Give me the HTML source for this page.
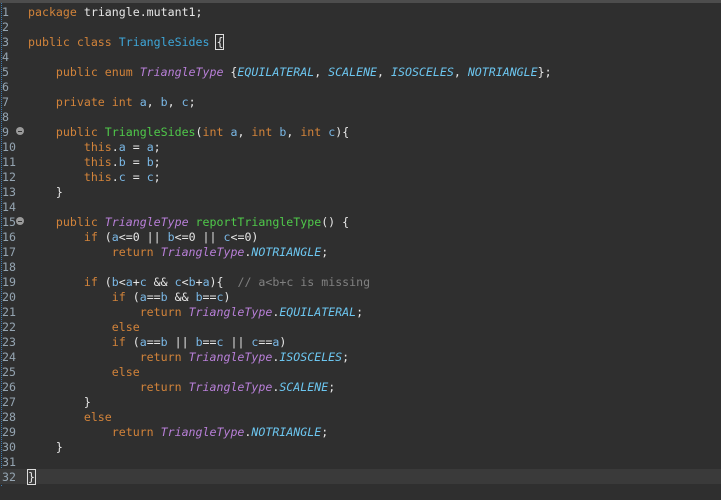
<!DOCTYPE html>
<html><head><style>
body{margin:0;width:721px;height:500px;background:#2f2f2f;overflow:hidden;position:relative;font-family:"DejaVu Sans Mono",monospace;font-size:11.6px;}
.top{position:absolute;left:0;top:0;width:721px;height:3px;background:#4d4d4d;}
.gut{position:absolute;left:1px;top:3px;width:1px;height:483px;border-left:1px dotted #3d7bb0;}
.hl{position:absolute;left:0;top:469px;width:721px;height:15px;background:#3a3a3a;}
pre{position:absolute;margin:0;top:5px;left:28px;line-height:15px;color:#e6e6e6;font-family:inherit;font-size:inherit;}
.ln{position:absolute;left:2px;top:5px;line-height:15px;color:#95a5b2;margin:0;font-family:inherit;font-size:inherit;}
.k{color:#d2833a}.c{color:#3ea6d8}.m{color:#4fc94a}.t{color:#b87fd8;font-style:italic}.e{color:#6cc6f0;font-style:italic}.v{color:#7ab8e6}.cm{color:#808080}
.fold{position:absolute;left:16px;width:8px;height:8px;border-radius:50%;background:#9a9a9a;}
.fold:after{content:"";position:absolute;left:2px;top:3.5px;width:4px;height:1px;background:#333;}
.cur{outline:1px solid #ddd;}
</style></head><body>
<div class="top"></div><div class="gut"></div><div class="hl"></div>
<pre class="ln">1
2
3
4
5
6
7
8
9
10
11
12
13
14
15
16
17
18
19
20
21
22
23
24
25
26
27
28
29
30
31
32</pre>
<div class="fold" style="top:127px"></div><div class="fold" style="top:217px"></div>
<pre><span class="k">package</span> triangle.mutant1;

<span class="k">public class</span> <span class="c">TriangleSides</span> <span class="cur">{</span>

    <span class="k">public enum</span> <span class="t">TriangleType</span> {<span class="e">EQUILATERAL</span>, <span class="e">SCALENE</span>, <span class="e">ISOSCELES</span>, <span class="e">NOTRIANGLE</span>};

    <span class="k">private int</span> <span class="v">a</span>, <span class="v">b</span>, <span class="v">c</span>;

    <span class="k">public</span> <span class="m">TriangleSides</span>(<span class="k">int</span> <span class="v">a</span>, <span class="k">int</span> <span class="v">b</span>, <span class="k">int</span> <span class="v">c</span>){
        <span class="k">this</span>.<span class="v">a</span> = <span class="v">a</span>;
        <span class="k">this</span>.<span class="v">b</span> = <span class="v">b</span>;
        <span class="k">this</span>.<span class="v">c</span> = <span class="v">c</span>;
    }

    <span class="k">public</span> <span class="t">TriangleType</span> <span class="m">reportTriangleType</span>() {
        <span class="k">if</span> (<span class="v">a</span>&lt;=0 || <span class="v">b</span>&lt;=0 || <span class="v">c</span>&lt;=0)
            <span class="k">return</span> <span class="t">TriangleType</span>.<span class="e">NOTRIANGLE</span>;

        <span class="k">if</span> (<span class="v">b</span>&lt;<span class="v">a</span>+<span class="v">c</span> &amp;&amp; <span class="v">c</span>&lt;<span class="v">b</span>+<span class="v">a</span>){  <span class="cm">// a&lt;b+c is missing</span>
            <span class="k">if</span> (<span class="v">a</span>==<span class="v">b</span> &amp;&amp; <span class="v">b</span>==<span class="v">c</span>)
                <span class="k">return</span> <span class="t">TriangleType</span>.<span class="e">EQUILATERAL</span>;
            <span class="k">else</span>
            <span class="k">if</span> (<span class="v">a</span>==<span class="v">b</span> || <span class="v">b</span>==<span class="v">c</span> || <span class="v">c</span>==<span class="v">a</span>)
                <span class="k">return</span> <span class="t">TriangleType</span>.<span class="e">ISOSCELES</span>;
            <span class="k">else</span>
                <span class="k">return</span> <span class="t">TriangleType</span>.<span class="e">SCALENE</span>;
        }
        <span class="k">else</span>
            <span class="k">return</span> <span class="t">TriangleType</span>.<span class="e">NOTRIANGLE</span>;
    }

<span class="cur">}</span></pre>
</body></html>
